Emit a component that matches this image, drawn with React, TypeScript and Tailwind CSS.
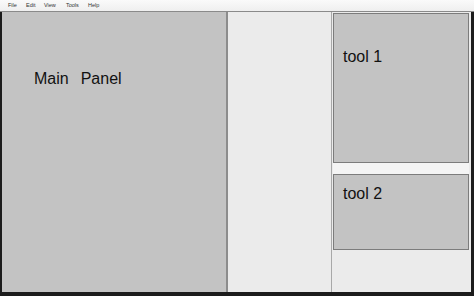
const menuItems = ['File', 'Edit', 'View', 'Tools', 'Help']

function ToolBox({ label, className }: { label: string; className: string }) {
  return (
    <div className={`border border-[#7c7c7c] bg-[#c3c3c3] ${className}`}>
      <span className="block pl-[9px] text-[16px] leading-4 text-[#111]">{label}</span>
    </div>
  )
}

export default function App() {
  return (
    <div
      className="flex h-[296px] w-[474px] flex-col overflow-hidden bg-[#ebebeb]"
      style={{ fontFamily: '"Liberation Sans", Arial, sans-serif' }}
    >
      {/* menu bar */}
      <div className="flex h-[12px] items-center border-b border-[#8a8a8a] bg-gradient-to-b from-[#fafafa] to-[#efefef] pl-[8px]">
        <div className="flex gap-[0px] text-[5.5px] leading-none text-[#333]">
          <span className="w-[18px]">{menuItems[0]}</span>
          <span className="w-[18px]">{menuItems[1]}</span>
          <span className="w-[22px]">{menuItems[2]}</span>
          <span className="w-[22px]">{menuItems[3]}</span>
          <span>{menuItems[4]}</span>
        </div>
      </div>

      <div className="flex min-h-0 flex-1">
        <div className="w-[2px] bg-[#1c1c1c]" />

        {/* main panel */}
        <div className="w-[226px] border-r-2 border-[#8c8c8c] bg-[#c3c3c3] pt-[59px] pl-[32px]">
          <p className="flex gap-[12px] text-[16px] leading-4 text-[#111]">
            <span>Main</span>
            <span>Panel</span>
          </p>
        </div>

        <div className="w-[103px] bg-[#ebebeb]" />

        {/* tool column */}
        <div className="flex w-[140px] flex-col border-l border-[#a8a8a8] bg-[#ebebeb] pl-px pr-[2px]">
          <ToolBox label="tool 1" className="mt-px h-[150px] pt-[35px]" />
          <div className="h-[11px] bg-[#f4f4f4]" />
          <ToolBox label="tool 2" className="h-[76px] pt-[11px]" />
        </div>

        <div className="w-[3px] bg-[#1c1c1c]" />
      </div>

      <div className="h-[4px] bg-[#1c1c1c]" />
    </div>
  )
}
